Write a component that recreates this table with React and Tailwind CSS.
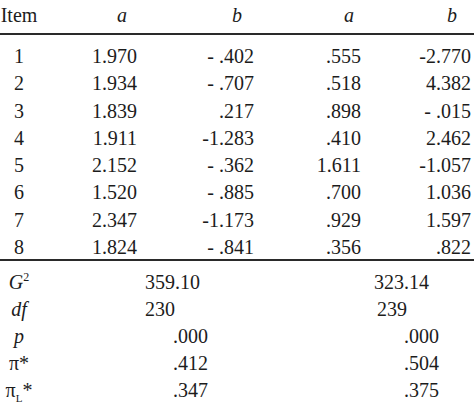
import React from "react";

const items = [
  ["1", "1.970", "- .402", ".555", "-2.770"],
  ["2", "1.934", "- .707", ".518", "4.382"],
  ["3", "1.839", ".217", ".898", "- .015"],
  ["4", "1.911", "-1.283", ".410", "2.462"],
  ["5", "2.152", "- .362", "1.611", "-1.057"],
  ["6", "1.520", "- .885", ".700", "1.036"],
  ["7", "2.347", "-1.173", ".929", "1.597"],
  ["8", "1.824", "- .841", ".356", ".822"],
];

const fits = [
  { label: <>G<sup className="not-italic text-[12px] -top-[8px]">2</sup></>, v1: "359.10", v2: "323.14", left: true },
  { label: "df", v1: "230", v2: "239", left: true, pad: true },
  { label: "p", v1: ".000", v2: ".000" },
  { label: <span className="not-italic">π*</span>, v1: ".412", v2: ".504" },
  {
    label: (
      <span className="not-italic">
        π<sub className="text-[11px] top-[5px]">L</sub>*
      </span>
    ),
    v1: ".347",
    v2: ".375",
  },
];

const App = () => {
  return (
    <div
      className="w-[474px] h-[410px] bg-white text-[#1c1c1c] text-[20px] overflow-hidden"
      style={{ fontFamily: '"Liberation Serif", "Times New Roman", serif' }}
    >
      {/* header */}
      <div className="flex pt-[2px] h-[29px] leading-[27px]">
        <div className="w-[38px] text-center">Item</div>
        <div className="w-[99px] text-right pr-[10px] italic">a</div>
        <div className="w-[117px] text-right pr-[12px] italic">b</div>
        <div className="w-[107px] text-right pr-[7px] italic">a</div>
        <div className="w-[110px] text-right pr-[14px] italic">b</div>
      </div>
      <div className="mt-[4px] border-t-2 border-[#2a2a2a]"></div>

      {/* item rows */}
      <div className="mt-[8px]">
        {items.map((r) => (
          <div key={r[0]} className="flex h-[27.3px] leading-[27.3px]">
            <div className="w-[38px] text-center">{r[0]}</div>
            <div className="w-[99px] text-right">{r[1]}</div>
            <div className="w-[117px] text-right whitespace-pre">{r[2]}</div>
            <div className="w-[107px] text-right">{r[3]}</div>
            <div className="w-[110px] text-right whitespace-pre">{r[4]}</div>
          </div>
        ))}
      </div>
      <div className="-mt-[2px] border-t-2 border-[#2a2a2a]"></div>

      {/* fit stats */}
      <div className="mt-[8px]">
        {fits.map((f, i) => (
          <div key={i} className="flex h-[27px] leading-[27px]">
            <div className="w-[38px] text-center italic">{f.label}</div>
            <div className={`ml-[107px] w-[63px] ${f.left ? "text-left" : "text-right"}`}>
              {f.v1}
            </div>
            <div
              className={`ml-[166px] w-[65px] ${f.left ? "text-left" : "text-right"} ${
                f.pad ? "pl-[3px]" : ""
              }`}
            >
              {f.v2}
            </div>
          </div>
        ))}
      </div>
    </div>
  );
};

export default App;
